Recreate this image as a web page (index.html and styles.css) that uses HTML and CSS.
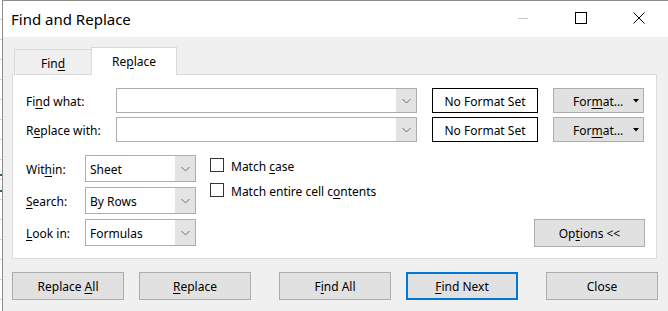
FILE: index.html
```html
<!DOCTYPE html>
<html lang="en">
<head>
<meta charset="utf-8">
<title>Find and Replace</title>
<link rel="stylesheet" href="styles.css">
</head>
<body>
<div class="screen">
  <div class="excel-strip"><span class="sel sel-a"></span><span class="sel sel-b"></span></div>
  <div class="dialog">
    <div class="titlebar">
      <span class="title">Find and Replace</span>
      <div class="caption">
        <span class="cap"><svg width="12" height="12" viewBox="0 0 12 12"><path d="M1 6.5H11" stroke="#c4c4c4" stroke-width="1"/></svg></span>
        <span class="cap"><svg width="12" height="12" viewBox="0 0 12 12"><rect x="0.5" y="0.5" width="11" height="11" fill="none" stroke="#000" stroke-width="1"/></svg></span>
        <span class="cap"><svg width="12" height="12" viewBox="0 0 12 12"><path d="M0.5 0.5L11.5 11.5M11.5 0.5L0.5 11.5" stroke="#000" stroke-width="1"/></svg></span>
      </div>
    </div>
    <div class="body">
      <div class="tabs">
        <div class="tab"><span>Fin<u>d</u></span></div>
        <div class="tab active"><span>Re<u>p</u>lace</span></div>
      </div>
      <div class="panel">
        <div class="find-grid">
          <label class="lbl"><span>Fi<u>n</u>d what:</span></label>
          <div class="combo"><span class="field"></span><span class="drop"><svg width="9" height="6" viewBox="0 0 9 6"><path d="M0.5 1L4.5 5L8.5 1" fill="none" stroke="#707070" stroke-width="1"/></svg></span></div>
          <div class="nofmt">No Format Set</div>
          <div class="btn fmt"><span>For<u>m</u>at…</span><svg width="6" height="4" viewBox="0 0 6 4"><path d="M0 0H6L3 3.5Z" fill="#000"/></svg></div>

          <label class="lbl"><span>R<u>e</u>place with:</span></label>
          <div class="combo"><span class="field"></span><span class="drop"><svg width="9" height="6" viewBox="0 0 9 6"><path d="M0.5 1L4.5 5L8.5 1" fill="none" stroke="#707070" stroke-width="1"/></svg></span></div>
          <div class="nofmt">No Format Set</div>
          <div class="btn fmt"><span>For<u>m</u>at…</span><svg width="6" height="4" viewBox="0 0 6 4"><path d="M0 0H6L3 3.5Z" fill="#000"/></svg></div>
        </div>
        <div class="lower">
          <div class="opt-grid">
            <label class="lbl"><span>Wit<u>h</u>in:</span></label>
            <div class="select"><span class="value">Sheet</span><span class="drop"><svg width="9" height="6" viewBox="0 0 9 6"><path d="M0.5 1L4.5 5L8.5 1" fill="none" stroke="#707070" stroke-width="1"/></svg></span></div>
            <label class="lbl"><span><u>S</u>earch:</span></label>
            <div class="select"><span class="value">By Rows</span><span class="drop"><svg width="9" height="6" viewBox="0 0 9 6"><path d="M0.5 1L4.5 5L8.5 1" fill="none" stroke="#707070" stroke-width="1"/></svg></span></div>
            <label class="lbl"><span><u>L</u>ook in:</span></label>
            <div class="select"><span class="value">Formulas</span><span class="drop"><svg width="9" height="6" viewBox="0 0 9 6"><path d="M0.5 1L4.5 5L8.5 1" fill="none" stroke="#707070" stroke-width="1"/></svg></span></div>
          </div>
          <div class="checks">
            <div class="check"><span class="box"></span><span class="ctext">Match <u>c</u>ase</span></div>
            <div class="check"><span class="box"></span><span class="ctext">Match entire cell c<u>o</u>ntents</span></div>
          </div>
          <div class="btn options"><span>Op<u>t</u>ions &lt;&lt;</span></div>
        </div>
      </div>
      <div class="buttons">
        <div class="btn act"><span>Replace <u>A</u>ll</span></div>
        <div class="btn act"><span><u>R</u>eplace</span></div>
        <div class="btn act wide-gap"><span>F<u>i</u>nd All</span></div>
        <div class="btn act default"><span><u>F</u>ind Next</span></div>
        <div class="btn act wide-gap"><span>Close</span></div>
      </div>
    </div>
  </div>
</div>
</body>
</html>
```

FILE: styles.css
```css
* { box-sizing: border-box; }
html, body { margin: 0; padding: 0; background: #ffffff; }
body {
  font-family: "Noto Sans", "Open Sans", sans-serif;
  font-size: 12px;
  color: #000;
}
u { text-decoration: underline; text-underline-offset: 2px; }

.screen {
  width: 668px;
  height: 311px;
  display: flex;
  overflow: hidden;
}

.excel-strip {
  width: 2px;
  flex: none;
  display: flex;
  flex-direction: column;
  background: repeating-linear-gradient(to bottom, #ffffff 0 19px, #d4d4d4 19px 20px);
}
.sel { display: block; width: 2px; height: 2px; background: #217346; }
.sel-a { margin-top: 174px; }
.sel-b { margin-top: 14px; }

.dialog {
  flex: 1;
  display: flex;
  flex-direction: column;
  border-left: 1px solid #8c8c8c;
  border-top: 1px solid #8c8c8c;
  background: #f0f0f0;
  min-width: 0;
}

.titlebar {
  height: 36px;
  flex: none;
  background: #ffffff;
  display: flex;
  align-items: center;
  padding-left: 8px;
}
.title { font-size: 15px; line-height: 20px; }
.caption { margin-left: auto; display: flex; height: 100%; }
.cap {
  width: 58px;
  display: flex;
  align-items: center;
  justify-content: center;
  padding-bottom: 2px;
}
.cap svg { display: block; }

.body {
  flex: 1;
  padding: 10px 0 0 9px;
}

.tabs {
  display: flex;
  align-items: flex-end;
  height: 27px;
  padding-left: 2px;
}
.tab {
  width: 78px;
  height: 25px;
  border: 1px solid #d9d9d9;
  border-bottom: none;
  display: flex;
  align-items: center;
  justify-content: center;
  padding-top: 2px;
}
.tab.active {
  width: 86px;
  height: 28px;
  margin-left: -1px;
  margin-bottom: -1px;
  background: #ffffff;
  position: relative;
  z-index: 1;
  padding-top: 0;
}

.panel {
  width: 645px;
  height: 185px;
  background: #ffffff;
  border: 1px solid #dcdcdc;
  padding: 13px 11px 10px 13px;
  display: flex;
  flex-direction: column;
}

.find-grid {
  display: grid;
  grid-template-columns: 75px 301px 106px 91px;
  grid-auto-rows: 25px;
  column-gap: 15px;
  row-gap: 4px;
  align-items: stretch;
}
.lbl { display: flex; align-items: center; white-space: nowrap; padding-top: 1px; }

.combo, .select {
  display: flex;
  border: 1px solid #adadad;
  background: #fff;
}
.field, .value { flex: 1; }
.value { display: flex; align-items: center; padding-left: 4px; padding-top: 1px; }
.drop {
  width: 20px;
  flex: none;
  background: #e3e3e3;
  display: flex;
  align-items: center;
  justify-content: center;
  padding-top: 1px;
}
.drop svg { display: block; }

.nofmt {
  border: 1px solid #000;
  display: flex;
  align-items: center;
  justify-content: center;
  padding-top: 1px;
}

.btn {
  background: #e1e1e1;
  border: 1px solid #adadad;
  display: flex;
  align-items: center;
  justify-content: center;
  white-space: nowrap;
  padding-top: 1px;
}
.btn.fmt {
  justify-content: flex-start;
  padding: 1px 4px 0 19px;
}
.btn.fmt svg { margin-left: auto; display: block; }

.lower {
  flex: 1;
  display: flex;
  margin-top: 13px;
}
.opt-grid {
  display: grid;
  grid-template-columns: 59px 111px;
  grid-auto-rows: 27px;
  row-gap: 5px;
  align-content: start;
}
.checks {
  margin-left: 14px;
  padding-top: 3px;
  display: flex;
  flex-direction: column;
  gap: 11px;
}
.check { display: flex; align-items: center; gap: 7px; height: 14px; }
.ctext { padding-top: 2px; }
.box {
  width: 14px;
  height: 14px;
  border: 1px solid #333;
  background: #fff;
  flex: none;
}
.btn.options {
  margin-left: auto;
  align-self: flex-end;
  width: 111px;
  height: 28px;
  margin-bottom: 1px;
}

.buttons {
  display: flex;
  margin-top: 13px;
}
.btn.act {
  width: 112px;
  height: 28px;
  flex: none;
  margin-left: 15px;
}
.btn.act:first-child { margin-left: 0; }
.btn.act.wide-gap { margin-left: 28px; }
.btn.default { border: 2px solid #0078d7; }
```
